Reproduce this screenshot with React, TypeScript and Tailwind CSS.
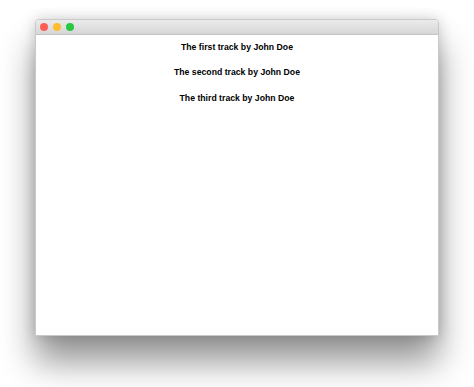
import React from 'react';

const tracks = [
  'The first track by John Doe',
  'The second track by John Doe',
  'The third track by John Doe',
];

const App: React.FC = () => {
  return (
    <div className="w-[474px] h-[387px] bg-white overflow-hidden pt-[19px] pl-[35px]">
      {/* Window */}
      <div className="w-[404px] h-[317px] bg-white flex flex-col shadow-[0_26px_34px_rgba(0,0,0,0.42),0_0_14px_rgba(0,0,0,0.18)] border border-[#c9c9c9] rounded-t-[4px]">
        {/* Title bar */}
        <div className="h-[15px] flex items-center gap-[5px] pl-[4px] bg-gradient-to-b from-[#ebebeb] to-[#d6d6d6] border-b border-[#c4c4c4] rounded-t-[4px]">
          <span className="w-[8px] h-[8px] rounded-full bg-[#fd5f57]" />
          <span className="w-[8px] h-[8px] rounded-full bg-[#febc2e]" />
          <span className="w-[8px] h-[8px] rounded-full bg-[#28c840]" />
        </div>

        {/* Track list */}
        <div className="flex flex-col items-center font-['Liberation_Sans',Arial,sans-serif] font-bold text-[8.7px] text-black">
          {tracks.map((t) => (
            <p key={t} className="leading-[25.3px]">{t}</p>
          ))}
        </div>
      </div>
    </div>
  );
};

export default App;
